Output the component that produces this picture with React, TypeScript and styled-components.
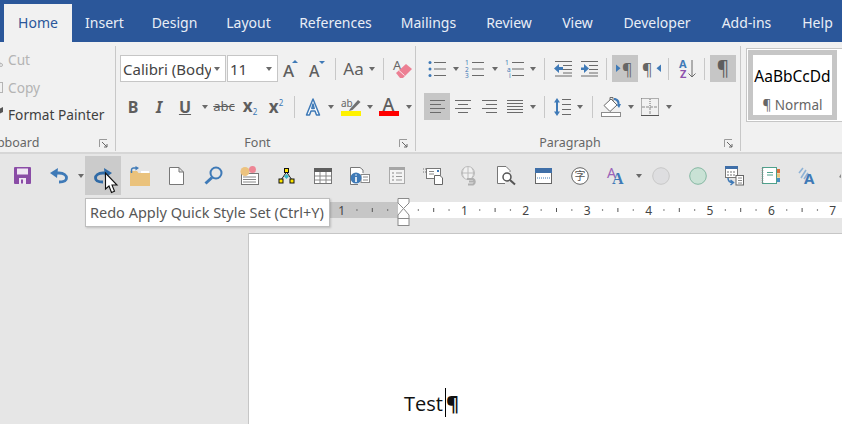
import React from "react";
import styled, { createGlobalStyle } from "styled-components";

const Global = createGlobalStyle`
  html, body { margin: 0; padding: 0; background: #e6e6e6; overflow: hidden; }
  body { font-family: "Noto Sans", "Open Sans", sans-serif; }
`;

const Page = styled.div`
  position: relative;
  width: 842px;
  height: 424px;
  overflow: hidden;
  display: flex;
  flex-direction: column;
`;

const TabBar = styled.div`
  height: 42px;
  flex: none;
  background: #2b579a;
  display: flex;
  align-items: flex-end;
  padding-left: 4px;
  box-sizing: border-box;
`;

const Tab = styled.div<{ $active?: boolean; $w: number }>`
  width: ${(p) => p.$w}px;
  height: 38px;
  flex: none;
  text-align: center;
  line-height: 37px;
  font-size: 14px;
  white-space: nowrap;
  color: ${(p) => (p.$active ? "#2b579a" : "#e9eef6")};
  background: ${(p) => (p.$active ? "#f1f1f1" : "transparent")};
`;

const Ribbon = styled.div`
  height: 112px;
  flex: none;
  box-sizing: border-box;
  background: #f1f1f1;
  border-bottom: 2px solid #d6d6d6;
  padding-top: 4px;
  display: flex;
  overflow: hidden;
`;

const Group = styled.div<{ $w: number; $ml?: number }>`
  width: ${(p) => p.$w}px;
  margin-left: ${(p) => p.$ml ?? 0}px;
  flex: none;
  box-sizing: border-box;
  height: 105px;
  border-right: 1px solid #c8c8c8;
  display: flex;
  flex-direction: column;
`;

const GroupBody = styled.div<{ $pl: number; $pt?: number }>`
  flex: 1;
  padding: ${(p) => p.$pt ?? 9}px 0 0 ${(p) => p.$pl}px;
  display: flex;
  flex-direction: column;
  gap: 11px;
`;

const ClipBody = styled(GroupBody)`
  gap: 0;
`;

const GroupFoot = styled.div`
  height: 16px;
  flex: none;
  display: grid;
  grid-template-columns: 1fr 16px;
  align-items: center;
  text-align: center;
  font-size: 12.5px;
  line-height: 16px;
  color: #666;
`;

const Launcher = styled.svg`
  display: block;
  width: 9px;
  height: 9px;
`;

const Row = styled.div`
  display: flex;
  align-items: center;
  height: 27px;
`;

const ClipRow = styled.div<{ $off?: boolean }>`
  display: flex;
  align-items: center;
  gap: 5px;
  height: 27.5px;
  font-size: 13.7px;
  white-space: nowrap;
  color: ${(p) => (p.$off ? "#b4b4b4" : "#3f3f3f")};
`;

const Btn = styled.div<{ $w: number; $on?: boolean }>`
  width: ${(p) => p.$w}px;
  height: 27px;
  flex: none;
  display: flex;
  align-items: center;
  justify-content: center;
  gap: 5px;
  color: #5e5e5e;
  background: ${(p) => (p.$on ? "#c6c6c6" : "transparent")};
`;

const Sep = styled.div<{ $l: number; $r: number }>`
  width: 1px;
  height: 22px;
  flex: none;
  background: #c8c8c8;
  margin: 0 ${(p) => p.$r}px 0 ${(p) => p.$l}px;
`;

const Caret = styled.span`
  width: 0;
  height: 0;
  flex: none;
  border-left: 3.5px solid transparent;
  border-right: 3.5px solid transparent;
  border-top: 4px solid #6a6a6a;
`;

const Combo = styled.div<{ $w: number }>`
  width: ${(p) => p.$w}px;
  height: 27px;
  flex: none;
  box-sizing: border-box;
  margin-right: 1px;
  background: #fff;
  border: 1px solid #c6c6c6;
  display: flex;
  align-items: center;
  justify-content: space-between;
  padding: 0 5px 0 2px;
  font-size: 15px;
  color: #444;
`;

const ComboText = styled.span`
  overflow: hidden;
  white-space: nowrap;
  flex: 1;
  margin-right: 3px;
`;

const Letter = styled.span<{ $size?: number; $bold?: boolean; $italic?: boolean; $under?: boolean; $strike?: boolean }>`
  font-size: ${(p) => p.$size ?? 16}px;
  font-weight: ${(p) => (p.$bold ? 700 : 400)};
  font-style: ${(p) => (p.$italic ? "italic" : "normal")};
  text-decoration: ${(p) => (p.$strike ? "line-through" : p.$under ? "underline" : "none")};
  line-height: 1;
  color: #5e5e5e;
  white-space: nowrap;
`;

const Script = styled.span<{ $top?: boolean }>`
  font-size: 8px;
  font-weight: 400;
  color: #3c78b5;
  vertical-align: ${(p) => (p.$top ? "7px" : "-3px")};
`;

const StyleBox = styled.div`
  margin: 2px 0 0 5px;
  width: 110px;
  height: 74px;
  flex: none;
  box-sizing: border-box;
  border: 1px solid #c6c6c6;
  background: #fff;
  padding: 1px 0 0 1px;
`;

const StyleFrame = styled.div`
  width: 89px;
  height: 70px;
  box-sizing: border-box;
  border: 5px solid #c6c6c6;
  background: #fff;
  display: flex;
  flex-direction: column;
  align-items: center;
  font-size: 15.5px;
  line-height: 20px;
  color: #000;
  padding-top: 11px;
`;

const StyleName = styled.div`
  margin-top: 9px;
  font-size: 13.5px;
  line-height: 20px;
  color: #666;
`;

const Qat = styled.div`
  height: 48px;
  flex: none;
  display: flex;
  padding: 2px 0 0 4px;
  box-sizing: border-box;
`;

const QatBtn = styled.div<{ $w?: number; $on?: boolean }>`
  width: ${(p) => p.$w ?? 36.7}px;
  height: 39px;
  flex: none;
  display: flex;
  align-items: center;
  justify-content: center;
  background: ${(p) => (p.$on ? "#cbcbcb" : "transparent")};
`;

const RulerWrap = styled.div`
  height: 16px;
  flex: none;
  margin-left: 248px;
`;

const Doc = styled.div`
  flex: 1;
  padding: 15px 0 0 248px;
  display: flex;
`;

const Sheet = styled.div`
  flex: 1;
  background: #fff;
  border: 1px solid #c6c6c6;
  border-width: 1px 0 0 1px;
  padding: 154px 0 0 155px;
  font-family: "Open Sans", sans-serif;
  font-size: 20px;
  line-height: 32px;
  color: #111;
  display: flex;
  align-items: flex-start;
`;

const TextCursor = styled.span`
  width: 1px;
  height: 29px;
  margin: 0 0 0 2px;
  background: #000;
  flex: none;
`;

const Pilcrow = styled.span`
  font-weight: 700;
`;

const Tooltip = styled.div`
  position: absolute;
  left: 85px;
  top: 198px;
  width: 245px;
  height: 29px;
  box-sizing: border-box;
  background: #fff;
  border: 1px solid #bdbdbd;
  box-shadow: 1px 1px 2px rgba(0, 0, 0, 0.18);
  padding-left: 4px;
  font-size: 14.5px;
  line-height: 27px;
  white-space: nowrap;
  color: #575757;
`;

const Pointer = styled.svg`
  position: absolute;
  left: 104px;
  top: 172px;
`;

const Svg = styled.svg`
  display: block;
  flex: none;
  overflow: visible;
`;

const BLUE = "#3f7ab7";
const GREY = "#6b6b6b";

const Launch = () => (
  <Launcher viewBox="0 0 9 9">
    <path d="M.5 8V.5H8" fill="none" stroke="#9a9a9a" />
    <path d="M3 3l5 5M8 5v3H5" fill="none" stroke="#666" />
  </Launcher>
);

const Lines = ({ rows, w = 18 }: { rows: [number, number][]; w?: number }) => (
  <Svg width={w} height={15} viewBox={`0 0 ${w} 15`}>
    {rows.map(([a, b], i) => (
      <path key={i} d={`M${a} ${1.5 + i * (12 / (rows.length - 1))}H${b}`} stroke={GREY} />
    ))}
  </Svg>
);

const ListIcon = ({ marks }: { marks: React.ReactNode }) => (
  <Svg width={20} height={18} viewBox="0 0 20 18">
    {marks}
    <path d="M7 2.5H19M7 9H19M7 15.5H19" stroke={GREY} />
  </Svg>
);

const Num = ({ y, c, x = 0 }: { y: number; c: string; x?: number }) => (
  <text x={x} y={y} fontSize="6.5" fontFamily="Noto Sans" fill={BLUE}>{c}</text>
);

const IndentIcon = ({ flip }: { flip?: boolean }) => (
  <Svg width={19} height={17} viewBox="0 0 19 17">
    <path d="M1 1.5H18M9 5.5H18M9 9.5H18M9 13H18M1 16H18" stroke={GREY} />
    <path d={flip ? "M1 7.5H4V4L9 8.5 4 13V10H1Z" : "M9 7H5V4L0 8.5 5 13V10H9Z"} fill={BLUE} />
  </Svg>
);

const ParaDir = ({ rtl }: { rtl?: boolean }) => (
  <Svg width={19} height={16} viewBox="0 0 19 16">
    <text x={rtl ? 0 : 6} y="13.500" fontSize="16" fontFamily="Noto Sans" fill="#666">¶</text>
    <path d={rtl ? "M19 3.500V11L14.500 7.200Z" : "M0 3.500V11L4.500 7.200Z"} fill={BLUE} />
  </Svg>
);

const SortIcon = () => (
  <Svg width={18} height={20} viewBox="0 0 18 20">
    <text x="0" y="9" fontSize="11" fontWeight="700" fontFamily="Noto Sans" fill={BLUE}>A</text>
    <text x="1" y="19" fontSize="11" fontWeight="700" fontFamily="Noto Sans" fill="#8e52ad">Z</text>
    <path d="M13 1V18M9.5 14.5L13 18l3.5-3.5" stroke={GREY} fill="none" />
  </Svg>
);

const SpacingIcon = () => (
  <Svg width={17} height={20} viewBox="0 0 17 20">
    <path d="M3 3V17" stroke={BLUE} strokeWidth="2" />
    <path d="M0 5.5L3 1 6 5.5ZM0 14.5L3 19 6 14.5Z" fill={BLUE} />
    <path d="M8 2.5H17M8 7.5H17M8 12.5H17M8 17.5H17" stroke={GREY} />
  </Svg>
);

const BucketIcon = () => (
  <Svg width={21} height={20} viewBox="0 0 21 20">
    <path d="M3 8.500L10 2l6 6-7 6.500z" fill="#fff" stroke={GREY} />
    <path d="M9 3V.5h3V4" fill="none" stroke={GREY} />
    <path d="M13 1c3.500 0 6 2.500 5.500 6l1.500 0-2 4-2.500-3.500h1.200C16.500 5 15.500 3.500 13 3z" fill={BLUE} />
    <rect x=".5" y="15.500" width="19" height="4" fill="#fff" stroke="#8c8c8c" />
  </Svg>
);

const BordersIcon = () => (
  <Svg width={18} height={18} viewBox="0 0 18 18">
    <path d="M.5.5H17.500V17M.5.5V17M9 1V8" stroke={GREY} strokeDasharray="1 1" fill="none" />
    <path d="M1 9H17M9 9V17" stroke="#8a8a8a" strokeDasharray="3 1" />
    <path d="M0 17.500H18" stroke="#555" />
  </Svg>
);

const Eraser = () => (
  <Svg width={20} height={20} viewBox="0 0 20 20">
    <text x="0" y="11" fontSize="13" fontFamily="Noto Sans" fill="#666">A</text>
    <path d="M3 14L13 5l6 5-9 9H7z" fill="#ec7f93" />
    <path d="M6 11.500l5.500 5" stroke="#fff" strokeWidth=".8" />
  </Svg>
);

const SizeA = ({ up }: { up?: boolean }) => (
  <Svg width={18} height={17} viewBox="0 0 18 17">
    <text x="0" y="17" fontSize={up ? "17" : "16"} fontWeight="500" fontFamily="Noto Sans" fill="#5e5e5e">A</text>
    <path d={up ? "M9 3L12 0 15 3Z" : "M10 1H16L13 4Z"} fill={BLUE} />
  </Svg>
);

const OutlineA = () => (
  <Svg width={16} height={18} viewBox="0 0 16 18">
    <path d="M8 1L14.500 17H11.500L10 13H6L4.500 17H1.500ZM8 6L6.800 10.500H9.200Z" fill="#fff" stroke={BLUE} strokeWidth="1.500" strokeLinejoin="round" />
  </Svg>
);

const Highlight = () => (
  <Svg width={20} height={18} viewBox="0 0 20 18">
    <text x="0" y="9" fontSize="10" fontFamily="Noto Sans" fill="#666">ab</text>
    <path d="M9 11l8-9 2.500 2-8 8-3.500 1z" fill="#707070" />
    <rect x="0" y="13" width="20" height="5" fill="#fff200" />
  </Svg>
);

const ColorA = () => (
  <Svg width={20} height={18} viewBox="0 0 20 18">
    <text x="3.500" y="13" fontSize="18" fontWeight="500" fontFamily="Noto Sans" fill="#5e5e5e">A</text>
    <rect x="0" y="13" width="20" height="5" fill="#f00" />
  </Svg>
);

const icons: Record<string, React.ReactNode> = {
  save: (
    <Svg width={17} height={17} viewBox="0 0 17 17">
      <path d="M1 0H16a1 1 0 0 1 1 1V16a1 1 0 0 1-1 1H1a1 1 0 0 1-1-1V1a1 1 0 0 1 1-1Z" fill="#8a4ca6" />
      <rect x="3" y="1.500" width="11" height="6" fill="#efe6f3" />
      <rect x="5" y="11" width="7" height="6" fill="#efe6f3" />
      <rect x="7" y="12.500" width="2" height="4" fill="#8a4ca6" />
    </Svg>
  ),
  undo: (
    <Svg width={18} height={15} viewBox="0 0 18 15">
      <path d="M8 0L0 5 7 10Z" fill={BLUE} />
      <path d="M6 5H9C14 5 16.500 7.500 16.500 10 16.500 12.500 14 14 9 14" fill="none" stroke={BLUE} strokeWidth="2.800" />
    </Svg>
  ),
  redo: (
    <Svg width={18} height={15} viewBox="0 0 18 15">
      <path d="M10 0L18 5 11 10Z" fill="#2f6aa6" />
      <path d="M12 5H9C4 5 1.500 7.500 1.500 10 1.500 12.500 4 14 9 14" fill="none" stroke="#2f6aa6" strokeWidth="2.800" />
    </Svg>
  ),
  folder: (
    <Svg width={20} height={20} viewBox="0 0 20 20">
      <path d="M0 5H7l1.500 2H20V20H0Z" fill="#eac27c" />
      <path d="M11 5H19V7H11Z" fill="#fff" />
      <path d="M1.500 7L1.500 4a2 2 0 0 1 2-2H6" fill="none" stroke={BLUE} strokeWidth="1.500" />
      <path d="M5.500 0L9 2 5.500 4.500Z" fill={BLUE} />
    </Svg>
  ),
  page: (
    <Svg width={15} height={18} viewBox="0 0 15 18">
      <path d="M.5.500H10L14.500 5V17.500H.5ZM10 .5V5H14.500" fill="#fff" stroke="#777" />
    </Svg>
  ),
  search: (
    <Svg width={19} height={19} viewBox="0 0 19 19">
      <circle cx="12" cy="7" r="5.500" fill="none" stroke={BLUE} strokeWidth="2" />
      <path d="M8 11.500L1.500 17.500" stroke={BLUE} strokeWidth="3" />
    </Svg>
  ),
  note: (
    <Svg width={20} height={19} viewBox="0 0 20 19">
      <rect x="1.500" y="7.500" width="17" height="11" fill="#fff" stroke="#777" />
      <path d="M3 11H16M3 13.500H16M3 16H16" stroke="#888" />
      <circle cx="5" cy="5.500" r="4.500" fill="#ecc37f" />
      <circle cx="12.500" cy="3.500" r="3.500" fill="#ee8695" />
    </Svg>
  ),
  tree: (
    <Svg width={17} height={16} viewBox="0 0 17 16">
      <path d="M8.500 4L3 12M8.500 4L14 12" stroke="#222" fill="none" />
      <rect x="6.500" y=".5" width="4" height="4" fill="#ffe600" stroke="#111" />
      <rect x="1" y="11" width="4" height="4" fill="#ffe600" stroke="#111" />
      <rect x="12" y="11" width="4" height="4" fill="#ffe600" stroke="#111" />
      <path d="M8.500 6l2.500 2.500-2.500 2.500L6 8.500z" fill="#39b6c6" />
    </Svg>
  ),
  table: (
    <Svg width={18} height={16} viewBox="0 0 18 16">
      <rect x=".5" y=".5" width="17" height="15" fill="#fff" stroke="#777" />
      <rect width="18" height="4" fill="#5e5e5e" />
      <path d="M6 4V15M12 4V15M1 8H17M1 12H17" stroke="#888" />
    </Svg>
  ),
  info: (
    <Svg width={20} height={18} viewBox="0 0 20 18">
      <path d="M13 6V3L10 .5H.5V17.500H8" fill="#fff" stroke="#777" />
      <rect x="11" y="7.500" width="8.500" height="8" fill="#fff" stroke="#888" />
      <path d="M13 10H18M13 13H18" stroke="#888" />
      <circle cx="6" cy="11" r="5.500" fill={BLUE} />
      <path d="M6 7.500V8.500M6 10V15" stroke="#fff" strokeWidth="1.600" />
    </Svg>
  ),
  form: (
    <Svg width={16} height={17} viewBox="0 0 16 17">
      <rect x=".5" y=".5" width="15" height="16" fill="#f4f4f4" stroke="#aaa" />
      <rect width="16" height="3" fill="#a6a6a6" />
      <path d="M7 6H13M7 9.500H13M7 13H13" stroke="#999" />
      <circle cx="4" cy="6" r="1" fill="#aaa" />
      <circle cx="4" cy="9.500" r="1" fill="#aaa" />
      <circle cx="4" cy="13" r="1" fill="#aaa" />
    </Svg>
  ),
  mail: (
    <Svg width={20} height={18} viewBox="0 0 20 18">
      <rect x="3.500" y="1.500" width="14" height="10" fill="#fff" stroke="#777" />
      <path d="M0 2H3M0 5H3" stroke="#777" strokeDasharray="1 1" />
      <path d="M6 4.500H11M6 7H11" stroke="#888" />
      <rect x="14" y="3" width="2" height="2" fill={BLUE} />
      <path d="M11.500 8.500H17L19.500 11V17.500H11.500Z" fill="#fff" stroke="#666" />
    </Svg>
  ),
  web: (
    <Svg width={19} height={20} viewBox="0 0 19 20">
      <circle cx="8" cy="7" r="6.500" fill="#f0f0f0" stroke="#bcbcbc" />
      <path d="M1.500 7H14.500M8 .5V13.500M4 2c-2 3-2 7 0 10M12 2c2 3 2 7 0 10" stroke="#bcbcbc" fill="none" />
      <path d="M7 13h6a3 3 0 0 1 0 5.500H8M9 15.500h6" stroke="#b0b0b0" strokeWidth="2" fill="none" />
    </Svg>
  ),
  preview: (
    <Svg width={19} height={19} viewBox="0 0 19 19">
      <path d="M8 17.500H.5V.5H9L13 4.500V6" fill="#fff" stroke="#777" />
      <circle cx="10" cy="11" r="4" fill="#fff" stroke="#555" strokeWidth="1.500" />
      <path d="M13 14l5 4.500" stroke="#555" strokeWidth="2" />
    </Svg>
  ),
  win: (
    <Svg width={17} height={16} viewBox="0 0 17 16">
      <rect x=".5" y=".5" width="16" height="15" fill="#fff" stroke="#666" />
      <rect width="17" height="5" fill="#3f6fa8" />
      <path d="M2 10H15" stroke={BLUE} strokeDasharray="1 1" />
    </Svg>
  ),
  han: (
    <Svg width={18} height={18} viewBox="0 0 18 18">
      <circle cx="9" cy="9" r="8.300" fill="#fff" stroke="#666" />
      <text x="3.500" y="13" fontSize="11" fontFamily="Noto Sans CJK SC" fill="#555">字</text>
    </Svg>
  ),
  styles: (
    <Svg width={19} height={17} viewBox="0 0 19 17">
      <text x="0" y="11" fontSize="14" fontFamily="Noto Sans" fill="#9a62b8">A</text>
      <text x="5" y="17" fontSize="16" fontWeight="700" fontFamily="Liberation Serif" fill={BLUE}>A</text>
    </Svg>
  ),
  dotGrey: (
    <Svg width={18} height={18} viewBox="0 0 18 18">
      <circle cx="9" cy="9" r="8.300" fill="#dedee0" stroke="#c8c8c8" />
    </Svg>
  ),
  dotGreen: (
    <Svg width={18} height={18} viewBox="0 0 18 18">
      <circle cx="9" cy="9" r="8.300" fill="#c9e2d5" stroke="#84b8a2" />
    </Svg>
  ),
  tableDoc: (
    <Svg width={19} height={20} viewBox="0 0 19 20">
      <rect x=".5" y=".5" width="12" height="11" fill="#fff" stroke="#777" />
      <rect width="13" height="3" fill="#3f6fa8" />
      <path d="M2 6H11M2 9H11" stroke="#777" strokeDasharray="2 1" />
      <rect x="11" y="9.500" width="7.500" height="9.500" fill="#fff" stroke="#666" />
      <path d="M13 12H17M13 14.500H17M13 17H17" stroke="#888" />
      <path d="M3 12c0 3 1.500 4.500 5 4.500M5.500 14l3 2.500-3 2.500" fill="none" stroke={BLUE} strokeWidth="1.500" />
    </Svg>
  ),
  book: (
    <Svg width={18} height={17} viewBox="0 0 18 17">
      <rect x=".5" y=".5" width="14" height="16" fill="#fff" stroke="#4fa18c" />
      <path d="M.5 1V16" stroke="#888" strokeWidth="1.500" strokeDasharray="1 1" />
      <path d="M5 5.500H11M5 8H11" stroke="#4fa18c" />
      <rect x="15" y="2" width="3" height="4" fill="#d9703c" />
      <rect x="15" y="6.500" width="3" height="4" fill="#edc77a" />
      <rect x="15" y="11" width="3" height="4" fill="#4a8fc4" />
    </Svg>
  ),
  slant: (
    <Svg width={18} height={16} viewBox="0 0 18 16">
      <path d="M0 5L4 0M2 10L7 2M5 11L9 5" stroke="#8fb3d6" strokeWidth="1.600" />
      <text x="5" y="16" fontSize="15" fontWeight="700" fontFamily="Noto Sans" fill={BLUE}>A</text>
    </Svg>
  ),
  more: (
    <Svg width={24} height={10} viewBox="0 0 24 10">
      <path d="M6 6L8 3V7Z" fill="#8a8a8a" />
    </Svg>
  ),
};

const ticks: number[] = [];
for (let i = -2; i <= 7; i++) ticks.push(i);

const Ruler = () => {
  const inch = 61.4;
  const zero = 155;
  const marks: React.ReactNode[] = [];
  ticks.forEach((n) => {
    const x = zero + n * inch;
    if (n !== 0 && n > -2) {
      marks.push(
        <text key={`n${n}`} x={x} y="12.500" textAnchor="middle" fontSize="12" fontFamily="Noto Sans" fill="#444">
          {Math.abs(n)}
        </text>
      );
    }
    marks.push(
      <circle key={`a${n}`} cx={x + inch * 0.25} cy="8" r=".7" fill="#555" />,
      <path key={`b${n}`} d={`M${x + inch * 0.5} 6V10`} stroke="#555" />,
      <circle key={`c${n}`} cx={x + inch * 0.75} cy="8" r=".7" fill="#555" />
    );
  });
  return (
    <Svg width={594} height={16} viewBox="0 0 594 16">
      <rect width="594" height="16" fill="#fff" />
      <rect width="150" height="16" fill="#c6c6c6" />
      {marks}
      <path d="M150 -3.500H161V1L155.500 6.500 150 1Z" fill="#fff" stroke="#8a8a8a" />
      <path d="M155.500 6.500L161 13V16.500H150V13Z" fill="#fff" stroke="#8a8a8a" />
      <rect x="150" y="16.500" width="11" height="7" fill="#fff" stroke="#8a8a8a" />
    </Svg>
  );
};

const App = () => (
  <Page>
    <Global />
    <TabBar>
      <Tab $active $w={68}>Home</Tab>
      <Tab $w={65}>Insert</Tab>
      <Tab $w={75}>Design</Tab>
      <Tab $w={73}>Layout</Tab>
      <Tab $w={101}>References</Tab>
      <Tab $w={85}>Mailings</Tab>
      <Tab $w={76}>Review</Tab>
      <Tab $w={61}>View</Tab>
      <Tab $w={98}>Developer</Tab>
      <Tab $w={81}>Add-ins</Tab>
      <Tab $w={61}>Help</Tab>
    </TabBar>
    <Ribbon>
      <Group $w={193} $ml={-77}>
        <ClipBody $pl={62} $pt={0}>
          <ClipRow $off>
            <Svg width={18} height={14} viewBox="0 0 18 14">
              <circle cx="13" cy="10" r="2" fill="none" stroke="#b4b4b4" />
              <circle cx="16" cy="12" r="1.500" fill="none" stroke="#b4b4b4" />
            </Svg>
            <span>Cut</span>
          </ClipRow>
          <ClipRow $off>
            <Svg width={18} height={14} viewBox="0 0 18 14">
              <rect x="11.500" y="2.500" width="6" height="10" fill="none" stroke="#b4b4b4" />
            </Svg>
            <span>Copy</span>
          </ClipRow>
          <ClipRow>
            <Svg width={18} height={14} viewBox="0 0 18 14">
              <path d="M14 1L18 -1V4L14 6Z" fill="#555" />
            </Svg>
            <span>Format Painter</span>
          </ClipRow>
        </ClipBody>
        <GroupFoot>
          <span>Clipboard</span>
          <Launch />
        </GroupFoot>
      </Group>

      <Group $w={300}>
        <GroupBody $pl={4}>
          <Row>
            <Combo $w={106}><ComboText>Calibri (Body)</ComboText><Caret /></Combo>
            <Combo $w={51}><ComboText>11</ComboText><Caret /></Combo>
            <Btn $w={26}><SizeA up /></Btn>
            <Btn $w={26}><SizeA /></Btn>
            <Sep $l={4} $r={4} />
            <Btn $w={38}><Letter $size={17}>Aa</Letter><Caret /></Btn>
            <Sep $l={5} $r={6} />
            <Btn $w={26}><Eraser /></Btn>
          </Row>
          <Row>
            <Btn $w={26}><Letter $bold>B</Letter></Btn>
            <Btn $w={26}><Letter $bold $italic>I</Letter></Btn>
            <Btn $w={26}><Letter $bold $under>U</Letter></Btn>
            <Btn $w={13}><Caret /></Btn>
            <Btn $w={26}><Letter $size={13} $strike>abc</Letter></Btn>
            <Btn $w={26}><Letter $bold $size={17}>x<Script>2</Script></Letter></Btn>
            <Btn $w={26}><Letter $bold $size={17}>x<Script $top>2</Script></Letter></Btn>
            <Sep $l={5} $r={5} />
            <Btn $w={26}><OutlineA /></Btn>
            <Btn $w={10}><Caret /></Btn>
            <Btn $w={30}><Highlight /></Btn>
            <Btn $w={8}><Caret /></Btn>
            <Btn $w={30}><ColorA /></Btn>
            <Btn $w={10}><Caret /></Btn>
          </Row>
        </GroupBody>
        <GroupFoot>
          <span>Font</span>
          <Launch />
        </GroupFoot>
      </Group>

      <Group $w={325}>
        <GroupBody $pl={8}>
          <Row>
            <Btn $w={26}>
              <ListIcon marks={<>
                <circle cx="3" cy="2.500" r="1.500" fill={BLUE} />
                <circle cx="3" cy="9" r="1.500" fill={BLUE} />
                <circle cx="3" cy="15.500" r="1.500" fill={BLUE} />
              </>} />
            </Btn>
            <Btn $w={12}><Caret /></Btn>
            <Btn $w={26}>
              <ListIcon marks={<><Num y={5} c="1" /><Num y={11.500} c="2" /><Num y={18} c="3" /></>} />
            </Btn>
            <Btn $w={14}><Caret /></Btn>
            <Btn $w={26}>
              <ListIcon marks={<><Num y={5} c="1" /><Num y={11.500} c="a" x={2} /><Num y={18} c="i" x={4} /></>} />
            </Btn>
            <Btn $w={10}><Caret /></Btn>
            <Sep $l={6} $r={5} />
            <Btn $w={26}><IndentIcon /></Btn>
            <Btn $w={26}><IndentIcon flip /></Btn>
            <Sep $l={4} $r={5} />
            <Btn $w={26} $on><ParaDir /></Btn>
            <Btn $w={26}><ParaDir rtl /></Btn>
            <Sep $l={4} $r={6} />
            <Btn $w={26}><SortIcon /></Btn>
            <Sep $l={3} $r={5} />
            <Btn $w={26} $on><Letter $size={19}>¶</Letter></Btn>
          </Row>
          <Row>
            <Btn $w={26} $on><Lines w={15} rows={[[0, 15], [0, 11], [0, 15], [0, 11]]} /></Btn>
            <Btn $w={26}><Lines rows={[[1, 17], [4, 14], [1, 17], [4, 14]]} /></Btn>
            <Btn $w={26}><Lines w={15} rows={[[0, 15], [4, 15], [0, 15], [4, 15]]} /></Btn>
            <Btn $w={26}><Lines rows={[[1, 17], [1, 17], [1, 17], [1, 17], [1, 17]]} /></Btn>
            <Btn $w={10}><Caret /></Btn>
            <Sep $l={6} $r={5} />
            <Btn $w={24}><SpacingIcon /></Btn>
            <Btn $w={12}><Caret /></Btn>
            <Sep $l={6} $r={5} />
            <Btn $w={26}><BucketIcon /></Btn>
            <Btn $w={13}><Caret /></Btn>
            <Btn $w={26}><BordersIcon /></Btn>
            <Btn $w={12}><Caret /></Btn>
          </Row>
        </GroupBody>
        <GroupFoot>
          <span>Paragraph</span>
          <Launch />
        </GroupFoot>
      </Group>

      <StyleBox>
        <StyleFrame>
          <span>AaBbCcDd</span>
          <StyleName>¶ Normal</StyleName>
        </StyleFrame>
      </StyleBox>
    </Ribbon>

    <Qat>
      <QatBtn>{icons.save}</QatBtn>
      <QatBtn>{icons.undo}</QatBtn>
      <QatBtn $w={8}><Caret /></QatBtn>
      <QatBtn $w={36} $on>{icons.redo}</QatBtn>
      <QatBtn>{icons.folder}</QatBtn>
      <QatBtn>{icons.page}</QatBtn>
      <QatBtn>{icons.search}</QatBtn>
      <QatBtn>{icons.note}</QatBtn>
      <QatBtn>{icons.tree}</QatBtn>
      <QatBtn>{icons.table}</QatBtn>
      <QatBtn>{icons.info}</QatBtn>
      <QatBtn>{icons.form}</QatBtn>
      <QatBtn>{icons.mail}</QatBtn>
      <QatBtn>{icons.web}</QatBtn>
      <QatBtn>{icons.preview}</QatBtn>
      <QatBtn>{icons.win}</QatBtn>
      <QatBtn>{icons.han}</QatBtn>
      <QatBtn>{icons.styles}</QatBtn>
      <QatBtn $w={8}><Caret /></QatBtn>
      <QatBtn>{icons.dotGrey}</QatBtn>
      <QatBtn>{icons.dotGreen}</QatBtn>
      <QatBtn>{icons.tableDoc}</QatBtn>
      <QatBtn>{icons.book}</QatBtn>
      <QatBtn>{icons.slant}</QatBtn>
      <QatBtn>{icons.more}</QatBtn>
    </Qat>

    <RulerWrap><Ruler /></RulerWrap>

    <Doc>
      <Sheet>
        <span>Test</span>
        <TextCursor />
        <Pilcrow>¶</Pilcrow>
      </Sheet>
    </Doc>

    <Tooltip>Redo Apply Quick Style Set (Ctrl+Y)</Tooltip>
    <Pointer width={17} height={22} viewBox="0 0 17 22">
      <path d="M1.500 1V17L5 14l2.500 6.500 3-1.200L8 13h5Z" fill="#fff" stroke="#111" strokeWidth="1.100" />
    </Pointer>
  </Page>
);

export default App;
